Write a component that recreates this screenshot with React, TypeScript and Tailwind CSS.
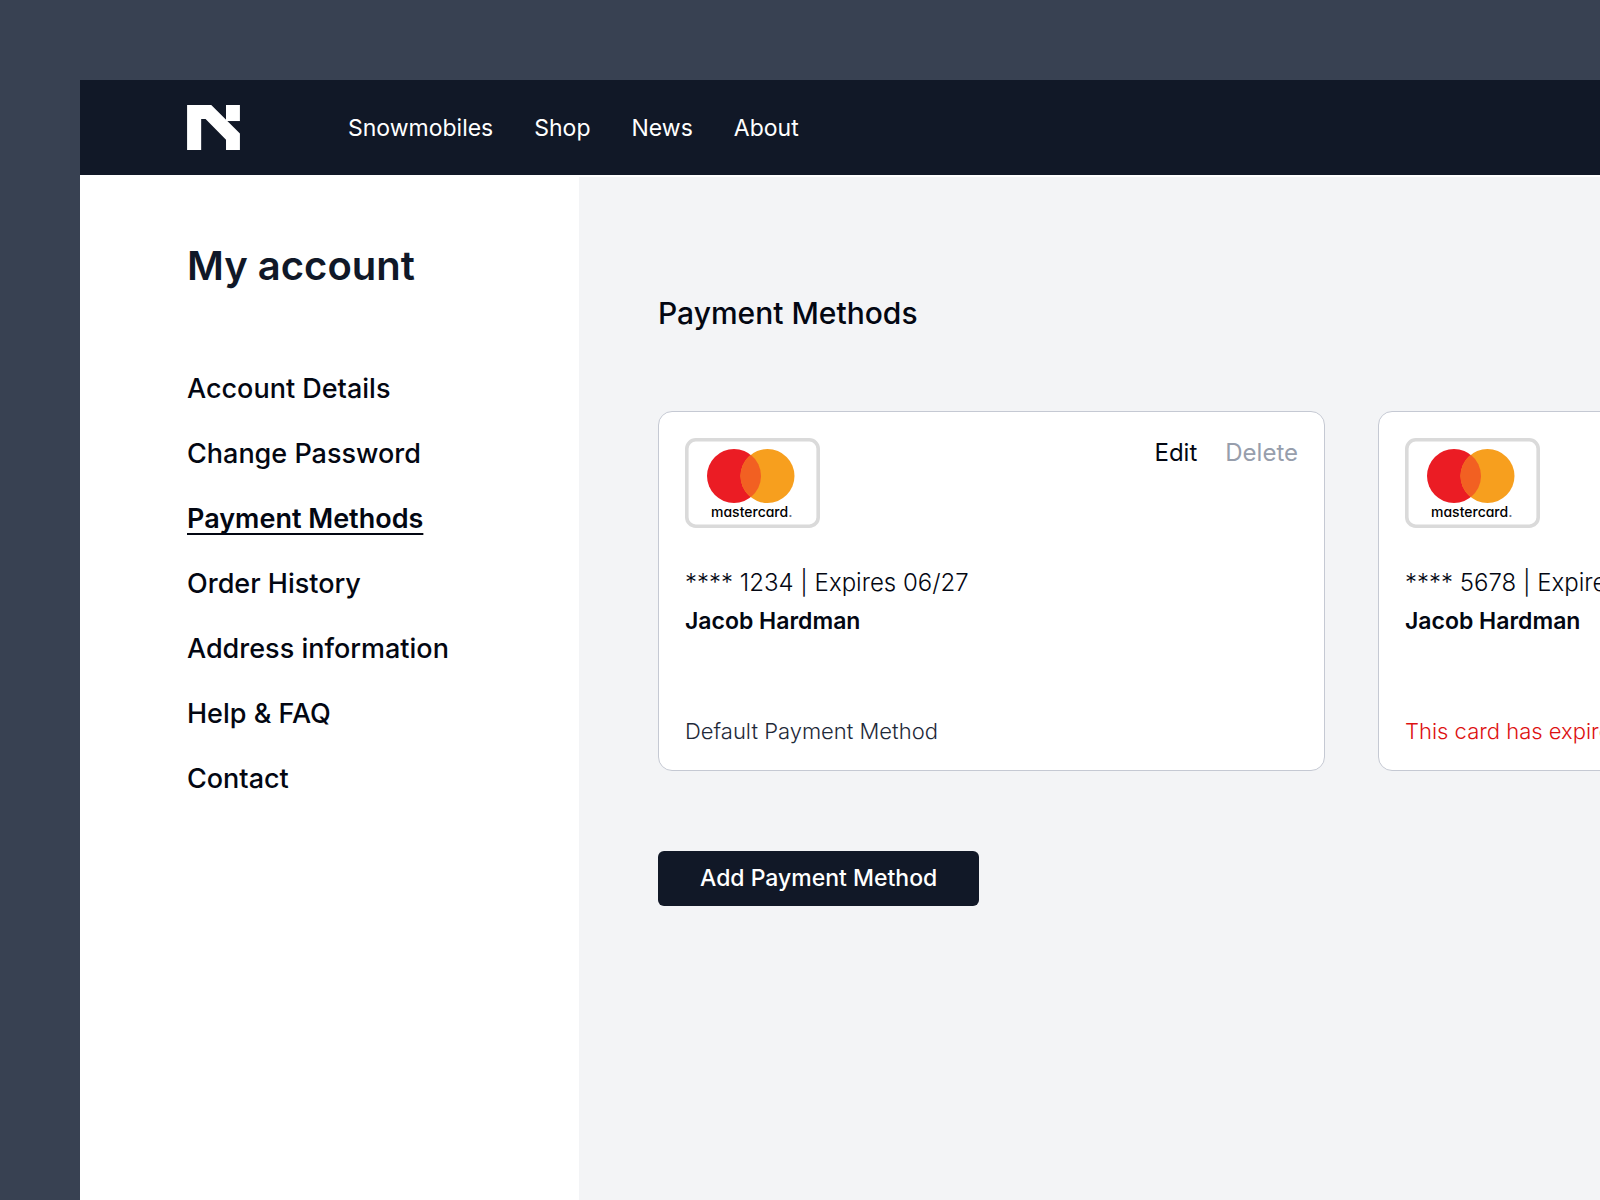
import React from 'react'

const navLinks = ['Snowmobiles', 'Shop', 'News', 'About']

const accountLinks = [
  'Account Details',
  'Change Password',
  'Payment Methods',
  'Order History',
  'Address information',
  'Help & FAQ',
  'Contact',
]

const cards = [
  { last4: '1234', expires: '06/27', name: 'Jacob Hardman', expired: false, note: 'Default Payment Method' },
  { last4: '5678', expires: '06/22', name: 'Jacob Hardman', expired: true, note: 'This card has expired' },
]

const Logo: React.FC = () => (
  <svg width="53" height="45" viewBox="0 0 54 46" fill="white" aria-label="Home">
    <path d="M0 0H24.7L54 29.2V46H39.8V35.6L18.9 14.4H14.4V46H0Z" />
    <path d="M39.8 0H54V16.4H39.8Z" />
  </svg>
)

const Mastercard: React.FC = () => (
  <svg width="135" height="90" viewBox="0 0 135 90" aria-label="Mastercard">
    <rect x="1.8" y="1.8" width="131.4" height="86.4" rx="9" fill="white" stroke="#dadada" strokeWidth="3.6" />
    <circle cx="49" cy="38" r="27" fill="#eb1c24" />
    <circle cx="82.5" cy="38" r="27" fill="#f79f1e" />
    <path d="M65.75 16.8A27 27 0 0 1 65.75 59.2A27 27 0 0 1 65.75 16.8Z" fill="#f26022" />
    <text x="26" y="79" fontSize="14" className="fill-black font-['Inter',sans-serif] font-medium [font-feature-settings:'cv11']">
      mastercard<tspan className="fill-gray-500">.</tspan>
    </text>
  </svg>
)

const PaymentCard: React.FC<{ card: (typeof cards)[number] }> = ({ card }) => (
  <li className="w-[667px] shrink-0 rounded-[14px] border border-[#c5c9d3] bg-white px-[26px] pt-[26px] pb-[21px]">
    <div className="flex items-start justify-between">
      <Mastercard />
      <div className="flex gap-7 text-2xl leading-[30px]">
        <button type="button" className="text-gray-950">Edit</button>
        <button type="button" className="text-[#979eac]">Delete</button>
      </div>
    </div>
    <div className="mt-9 leading-[38px] text-gray-950">
      <p className="text-2xl leading-[38px] font-light">
        **** {card.last4} | Expires {card.expires}
      </p>
      <p className="text-[23px] font-semibold">{card.name}</p>
    </div>
    <p className={`mt-[73px] text-[22px] leading-9 font-light ${card.expired ? 'text-[#dd1111]' : 'text-gray-800'}`}>
      {card.note}
    </p>
  </li>
)

const App: React.FC = () => {
  return (
    <div className="flex min-h-screen flex-col overflow-hidden bg-[#384152] pt-20 pl-20 font-['Inter',sans-serif]">
      <header className="flex h-[95px] items-center bg-[#111827] pl-[107px]">
        <a href="#">
          <Logo />
        </a>
        <nav className="ml-[108px] flex gap-[41px] pt-px text-[23px] text-white">
          {navLinks.map((link) => (
            <a key={link} href="#">{link}</a>
          ))}
        </nav>
      </header>

      <div className="flex grow">
        <aside className="w-[499px] shrink-0 bg-white pt-16 pl-[107px]">
          <h1 className="text-[40px] leading-[54px] font-semibold text-gray-900">My account</h1>
          <ul className="mt-[76px] space-y-[25px] text-[27px] leading-10 font-medium text-gray-950">
            {accountLinks.map((link) => (
              <li key={link} className="flex">
                <a
                  href="#"
                  className={
                    link === 'Payment Methods'
                      ? 'font-semibold underline decoration-2 underline-offset-[5px] [text-decoration-skip-ink:none]'
                      : ''
                  }
                >
                  {link}
                </a>
              </li>
            ))}
          </ul>
        </aside>

        <main className="min-w-0 grow border-t-2 border-white bg-[#f3f4f6] pl-[79px]">
          <h2 className="mt-[116px] text-[30px] leading-10 font-medium text-gray-950">Payment Methods</h2>
          <ul className="mt-[78px] flex gap-[53px]">
            {cards.map((card) => (
              <PaymentCard key={card.last4} card={card} />
            ))}
          </ul>
          <button
            type="button"
            className="mt-20 h-[55px] rounded-md bg-[#111827] px-[42px] text-[23px] font-medium text-white"
          >
            Add Payment Method
          </button>
        </main>
      </div>
    </div>
  )
}

export default App
